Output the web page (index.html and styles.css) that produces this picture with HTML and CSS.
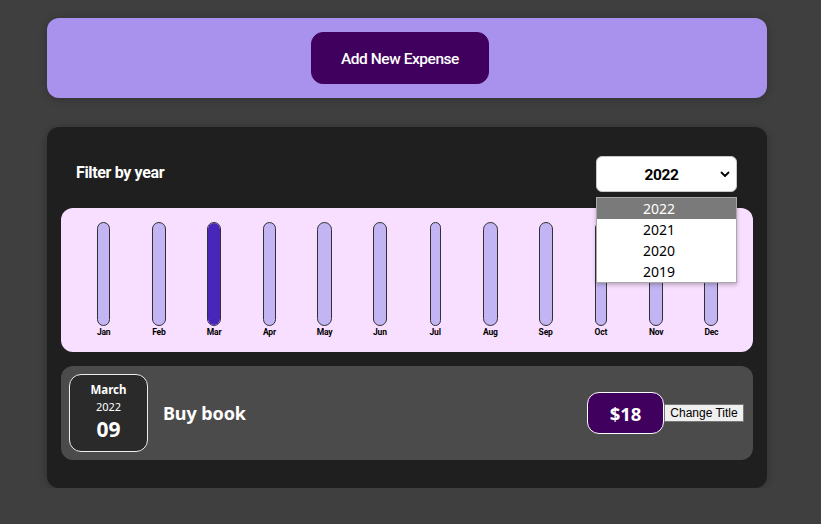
FILE: index.html
```html
<!DOCTYPE html>
<html lang="en">
<head>
<meta charset="utf-8">
<title>Expenses</title>
<link rel="stylesheet" href="styles.css">
</head>
<body>
<div class="app">
  <section class="new-expense">
    <button class="add-btn">Add New Expense</button>
  </section>

  <section class="expenses">
    <div class="filter">
      <span class="filter-label">Filter by year</span>
      <div class="select-wrap">
        <div class="select">
          <span class="select-value">2022</span>
          <svg class="chev" width="10" height="7" viewBox="0 0 10 7"><path d="M1.5 1.5 L5 5 L8.5 1.5" fill="none" stroke="#000" stroke-width="1.8" stroke-linecap="round" stroke-linejoin="round"/></svg>
        </div>
        <ul class="options">
          <li class="opt selected">2022</li>
          <li class="opt">2021</li>
          <li class="opt">2020</li>
          <li class="opt">2019</li>
        </ul>
      </div>
    </div>

    <div class="chart">
      <div class="bar"><div class="bar-inner"></div><span class="bar-label">Jan</span></div>
      <div class="bar"><div class="bar-inner"></div><span class="bar-label">Feb</span></div>
      <div class="bar"><div class="bar-inner"><div class="bar-fill" style="height:100%"></div></div><span class="bar-label">Mar</span></div>
      <div class="bar"><div class="bar-inner"></div><span class="bar-label">Apr</span></div>
      <div class="bar"><div class="bar-inner"></div><span class="bar-label">May</span></div>
      <div class="bar"><div class="bar-inner"></div><span class="bar-label">Jun</span></div>
      <div class="bar"><div class="bar-inner"></div><span class="bar-label">Jul</span></div>
      <div class="bar"><div class="bar-inner"></div><span class="bar-label">Aug</span></div>
      <div class="bar"><div class="bar-inner"></div><span class="bar-label">Sep</span></div>
      <div class="bar"><div class="bar-inner"></div><span class="bar-label">Oct</span></div>
      <div class="bar"><div class="bar-inner"></div><span class="bar-label">Nov</span></div>
      <div class="bar"><div class="bar-inner"></div><span class="bar-label">Dec</span></div>
    </div>

    <div class="item">
      <div class="date">
        <div class="date-month">March</div>
        <div class="date-year">2022</div>
        <div class="date-day">09</div>
      </div>
      <div class="item-desc">
        <h2 class="item-title">Buy book</h2>
        <div class="price">$18</div>
      </div>
      <button class="change-btn">Change Title</button>
    </div>
  </section>
</div>
</body>
</html>
```

FILE: styles.css
```css
* { box-sizing: border-box; }

html, body {
  margin: 0;
  padding: 0;
  background: #3f3f3f;
}

body {
  font-family: "Noto Sans", "Open Sans", sans-serif;
}

.app {
  width: 720px;
  margin: 0 0 0 47px;
  padding-top: 18px;
}

.new-expense {
  background: #a892ee;
  border-radius: 12px;
  height: 80px;
  padding: 14px 14px 0 0;
  display: flex;
  justify-content: center;
  align-items: flex-start;
  box-shadow: 0 1px 8px rgba(0, 0, 0, 0.25);
}

.add-btn {
  width: 178px;
  height: 52px;
  background: #40005d;
  color: #fff;
  border: 1px solid #40005d;
  border-radius: 12px;
  font-family: "Roboto", sans-serif;
  font-weight: 500;
  font-size: 15.5px;
  letter-spacing: -0.45px;
  padding-top: 2px;
  cursor: pointer;
}

.expenses {
  margin-top: 29px;
  background: #1f1f1f;
  border-radius: 12px;
  padding: 14px 14px 28px;
  box-shadow: 0 1px 8px rgba(0, 0, 0, 0.25);
}

.filter {
  display: flex;
  justify-content: space-between;
  align-items: center;
  padding: 15px 16px 16px 15px;
}

.filter-label {
  color: #fff;
  font-family: "Roboto", sans-serif;
  font-weight: bold;
  font-size: 16px;
  letter-spacing: -0.35px;
  margin-top: -4px;
}

.select-wrap {
  position: relative;
}

.select {
  width: 141px;
  height: 36px;
  background: #fff;
  border: 1px solid #c8c8c8;
  border-radius: 6px;
  display: flex;
  align-items: center;
  padding: 0 6px 0 6px;
}

.select-value {
  flex: 1;
  text-align: center;
  font-family: "Roboto", sans-serif;
  font-weight: bold;
  font-size: 15.5px;
  letter-spacing: -0.4px;
  color: #000;
  padding-top: 2px;
}

.chev {
  display: block;
}

.options {
  position: absolute;
  top: 41px;
  left: 0;
  width: 141px;
  margin: 0;
  padding: 0;
  list-style: none;
  background: #fff;
  border: 1px solid #a8a8a8;
  box-shadow: 0 2px 4px rgba(0, 0, 0, 0.25);
  z-index: 5;
}

.opt {
  height: 21px;
  line-height: 21px;
  padding-left: 46px;
  font-size: 14px;
  color: #000;
}

.opt.selected {
  background: #7a7a7a;
  color: #fff;
}

.chart {
  display: grid;
  grid-template-columns: repeat(12, 1fr);
  justify-items: center;
  height: 144px;
  padding: 14px 14px 14px 15px;
  background: #f8dfff;
  border-radius: 12px;
}

.bar {
  display: flex;
  flex-direction: column;
  align-items: stretch;
  height: 100%;
}

.bar-inner {
  width: 100%;
  min-width: 11px;
  flex: 1;
  border: 1px solid #313131;
  border-radius: 12px;
  background: #c3b4f3;
  overflow: hidden;
  display: flex;
  flex-direction: column;
  justify-content: flex-end;
}

.bar-fill {
  width: 100%;
  background: #4826b9;
}

.bar-label {
  font-family: "Roboto", sans-serif;
  font-weight: bold;
  font-size: 8.5px;
  letter-spacing: -0.2px;
  line-height: 12px;
  text-align: center;
  color: #000;
}

.item {
  margin-top: 14px;
  height: 94px;
  background: #4b4b4b;
  border-radius: 12px;
  padding: 7px 9px 7px 8px;
  display: flex;
  align-items: center;
}

.date {
  width: 79px;
  height: 78px;
  border: 1px solid #ececec;
  border-radius: 12px;
  background: #2a2a2a;
  color: #fff;
  display: flex;
  flex-direction: column;
  align-items: center;
  justify-content: center;
}

.date-month {
  font-weight: bold;
  font-size: 11.5px;
  line-height: 16px;
  margin-top: -2px;
}

.date-year {
  font-size: 11px;
  line-height: 17px;
}

.date-day {
  font-weight: bold;
  font-size: 21px;
  line-height: 28px;
}

.item-desc {
  flex: 1;
  display: flex;
  align-items: center;
  justify-content: space-between;
  margin-left: 15px;
}

.item-title {
  margin: 0;
  color: #fff;
  font-size: 18px;
  font-weight: bold;
  letter-spacing: -0.1px;
}

.price {
  width: 77px;
  height: 42px;
  background: #40005d;
  border: 1px solid #fff;
  border-radius: 12px;
  color: #fff;
  font-weight: bold;
  font-size: 18.5px;
  display: flex;
  align-items: center;
  justify-content: center;
}

.change-btn {
  width: 80px;
  height: 18px;
  padding: 0;
  background: #efefef;
  border: 1px solid #767676;
  border-radius: 0;
  font-family: "Liberation Sans", Arial, sans-serif;
  font-size: 12px;
  color: #000;
  line-height: 16px;
  text-align: center;
  white-space: nowrap;
}
```
